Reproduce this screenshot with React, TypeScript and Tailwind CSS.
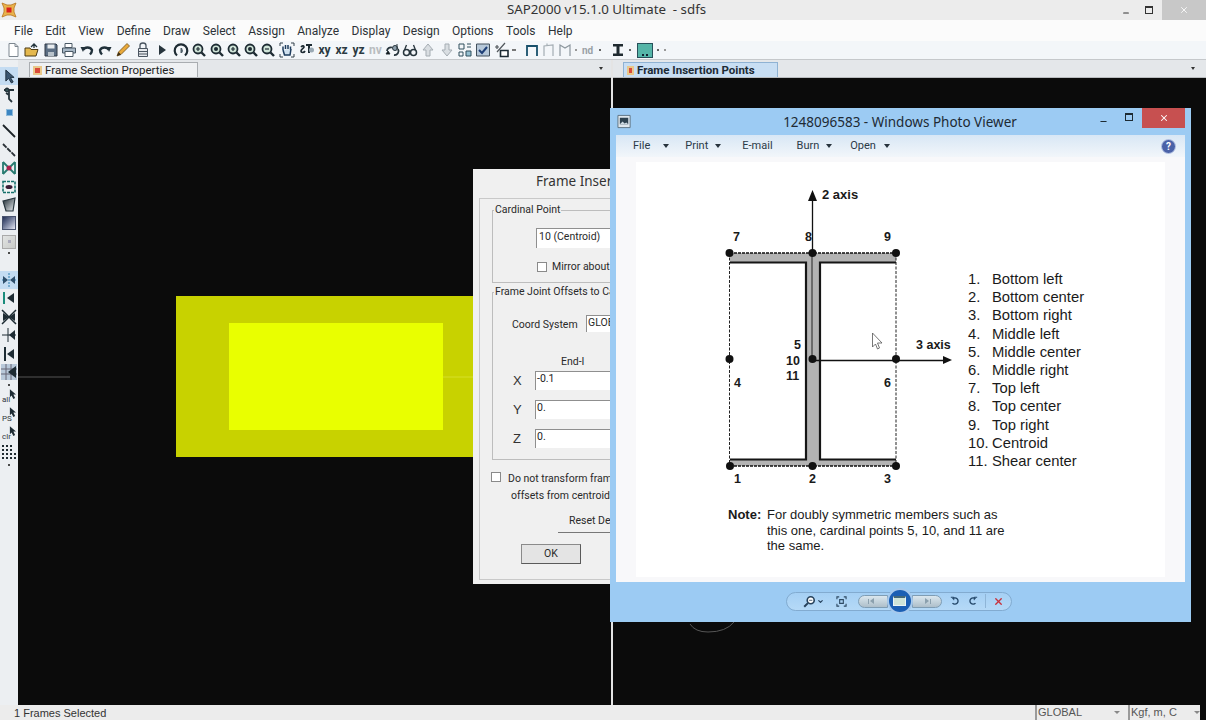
import type { ReactNode } from "react";
import { ChevronDown, Minus, X } from "lucide-react";

const menus = ["File", "Edit", "View", "Define", "Draw", "Select", "Assign", "Analyze", "Display", "Design", "Options", "Tools", "Help"];

const legend = ["Bottom left", "Bottom center", "Bottom right", "Middle left", "Middle center", "Middle right", "Top left", "Top center", "Top right", "Centroid", "Shear center"];

function Ic({ children }: { children: ReactNode }) {
  return (
    <svg viewBox="0 0 16 16" className="w-4 h-4 shrink-0">
      {children}
    </svg>
  );
}

function Mag({ sign }: { sign?: string }) {
  return (
    <Ic>
      <circle cx="7" cy="7" r="4.5" fill="#cfe4d8" stroke="#1d2b33" strokeWidth="1.8" />
      <path d="M10.5 10.5 14 14" stroke="#1d2b33" strokeWidth="2.4" />
      {sign === "plus" && <path d="M5 7h4M7 5v4" stroke="#1d2b33" strokeWidth="1.2" />}
      {sign === "minus" && <path d="M5 7h4" stroke="#1d2b33" strokeWidth="1.2" />}
      {sign === "dot" && <circle cx="7" cy="7" r="2" fill="#1d2b33" />}
    </Ic>
  );
}

function Word({ text, faded }: { text: string; faded?: boolean }) {
  return (
    <span className={faded ? "text-[12px] font-bold text-[#b9bdc0]" : "text-[12px] font-bold text-[#2b3a42]"}>{text}</span>
  );
}

const topTools: { w: string; icon: ReactNode }[] = [
  { w: "w-[18px]", icon: <Ic><path d="M4 1.5h6l3 3v10H4z" fill="#fff" stroke="#7d8790" /><path d="M10 1.5v3h3" fill="none" stroke="#7d8790" /></Ic> },
  { w: "w-[19px]", icon: <Ic><path d="M1 6h5l1 1.500h7l-2 6.500H1z" fill="#e4b84e" stroke="#4b3a14" /><path d="M7 5l3-3 3 3M10 2v4" fill="none" stroke="#22343c" strokeWidth="1.300" /></Ic> },
  { w: "w-[19px]", icon: <Ic><path d="M2 2h11l1 1v11H2z" fill="#5c6f84" stroke="#303b47" /><path d="M4.500 2.500h7v4h-7z" fill="#e8ecef" /><path d="M5 10h6v4H5z" fill="#b9c3cb" /></Ic> },
  { w: "w-[18px]", icon: <Ic><path d="M4 1.500h7v4H4z" fill="#fff" stroke="#4a5965" /><path d="M1.500 6h13v5h-13z" fill="#a8b8c6" stroke="#4a5965" /><path d="M4 9.500h8v5H4z" fill="#fff" stroke="#4a5965" /></Ic> },
  { w: "w-[18px]", icon: <Ic><path d="M4 8a5 4.500 0 0 1 9 0c0 2-1 3.500-2 4.500" fill="none" stroke="#20303a" strokeWidth="2.400" /><path d="M1.500 5 6 5 4 10z" fill="#20303a" /></Ic> },
  { w: "w-[17px]", icon: <Ic><path d="M12 8a5 4.500 0 0 0-9 0c0 2 1 3.500 2 4.500" fill="none" stroke="#20303a" strokeWidth="2.400" /><path d="M14.500 5 10 5 12 10z" fill="#20303a" /></Ic> },
  { w: "w-[20px]", icon: <Ic><path d="M2 14l1.500-4L12 1.500 14.500 4 6 12.500z" fill="#e9a93a" stroke="#70501a" strokeWidth=".8" /><path d="M2 14l1.500-4 2.500 2.500z" fill="#3d2f18" /></Ic> },
  { w: "w-[20px]", icon: <Ic><path d="M5 6V3.500a3 2.500 0 0 1 6 0V6" fill="none" stroke="#4a5560" strokeWidth="1.300" /><path d="M3.500 6.500h9v8h-9z" fill="#e6e9ec" stroke="#4a5560" /><path d="M3.500 9.500h9M3.500 12h9" stroke="#4a5560" /></Ic> },
  { w: "w-[18px]", icon: <Ic><path d="M5 3l7 5-7 5z" fill="#27353d" /></Ic> },
  { w: "w-[19px]", icon: <Ic><path d="M4 13.500A6.300 6.300 0 1 1 12 13.500" fill="none" stroke="#1d2b33" strokeWidth="2.200" /><path d="M7.500 6h1.500l1 3-1 2H7.500z" fill="#51606b" /></Ic> },
  { w: "w-[18px]", icon: <Mag sign="plus" /> },
  { w: "w-[17px]", icon: <Mag sign="dot" /> },
  { w: "w-[17px]", icon: <Mag sign="plus" /> },
  { w: "w-[17px]", icon: <Mag sign="dot" /> },
  { w: "w-[18px]", icon: <Mag sign="minus" /> },
  { w: "w-[20px]", icon: <Ic><path d="M1 1h3M1 1v3M15 1h-3M15 1v3M1 15h3M1 15v-3M15 15h-3M15 15v-3" stroke="#32414b" /><path d="M4 8V4.500M6.500 7V3M9 7V3M11.500 7.500V4.500M4 8l1.500 5h5.500l1-6" fill="#cfe0ee" stroke="#1d3c5e" strokeWidth="1.500" /></Ic> },
  { w: "w-[19px]", icon: <Ic><path d="M2 5c2-2 3-1 3 0s-3 2-3 4 3 2 4 0" fill="none" stroke="#1d2b33" strokeWidth="1.700" /><path d="M7 3h6M10 3v8" stroke="#1d2b33" strokeWidth="2" /><circle cx="12.500" cy="8" r="2.500" fill="#9aa9b4" /></Ic> },
  { w: "w-[17px]", icon: <Word text="xy" /> },
  { w: "w-[17px]", icon: <Word text="xz" /> },
  { w: "w-[17px]", icon: <Word text="yz" /> },
  { w: "w-[17px]", icon: <Word text="nv" faded /> },
  { w: "w-[17px]", icon: <Ic><path d="M2 9a4 4 0 0 1 5-3.500M9 13a4 4 0 0 0 4-6" fill="none" stroke="#26343c" strokeWidth="1.800" /><circle cx="10" cy="6" r="2.500" fill="#8ea0ad" stroke="#26343c" /><path d="M1 12l2-3 2 3zM12 2v5" stroke="#26343c" /></Ic> },
  { w: "w-[18px]", icon: <Ic><circle cx="4.500" cy="10.500" r="3" fill="none" stroke="#26343c" strokeWidth="1.500" /><circle cx="11.500" cy="10.500" r="3" fill="none" stroke="#26343c" strokeWidth="1.500" /><path d="M7 9.500h2M2.500 8l2-5M13.500 8l-2-5" stroke="#26343c" strokeWidth="1.300" /></Ic> },
  { w: "w-[18px]", icon: <Ic><path d="M8 2l5 6h-3v6H6V8H3z" fill="#d9dee2" stroke="#a5adb3" /></Ic> },
  { w: "w-[19px]", icon: <Ic><path d="M8 14l5-6h-3V2H6v6H3z" fill="#d9dee2" stroke="#a5adb3" /></Ic> },
  { w: "w-[18px]", icon: <Ic><path d="M2 2h5v5H2zM10 2h4M10 5h4M2 10h4v4H2z" fill="none" stroke="#2f4e5c" /><path d="M9 9h5v5H9z" fill="#94bfd1" stroke="#2f4e5c" /></Ic> },
  { w: "w-[18px]", icon: <Ic><path d="M1.500 2h13v12h-13z" fill="#b6c8d9" stroke="#42505c" /><path d="M4 8l3 3 5-6" fill="none" stroke="#1e3f76" strokeWidth="2" /></Ic> },
  { w: "w-[20px]", icon: <Ic><path d="M1 5h4M3 3v4M11 1 3 10" stroke="#51575c" strokeWidth="1.200" /><path d="M6.500 8.500h7.500v6H6.500z" fill="#fff" stroke="#1d2b33" strokeWidth="1.600" /></Ic> },
];

const midTools: { w: string; icon: ReactNode }[] = [
  { w: "w-[18px]", icon: <Ic><path d="M3 14V4h10v10" fill="none" stroke="#18506b" strokeWidth="1.800" /></Ic> },
  { w: "w-[16px]", icon: <Ic><path d="M3 14V4l9-1v11M6 4V1.500" fill="none" stroke="#a4adb3" strokeWidth="1.200" /></Ic> },
  { w: "w-[16px]", icon: <Ic><path d="M3 14V3l5 3 5-3v11" fill="none" stroke="#8d979e" strokeWidth="1.200" /></Ic> },
];

function SideDot({ tight }: { tight?: boolean }) {
  return <span className={tight ? "w-[2px] h-[2px] bg-[#4a4a4a] my-px" : "w-[2px] h-[2px] bg-[#4a4a4a] my-[2.300px]"} />;
}

function SideIcon({ children, on }: { children: ReactNode; on?: boolean }) {
  return (
    <div className={on ? "w-[18px] h-[18.400px] flex items-center justify-center bg-[#c4dcf2]" : "w-[18px] h-[18.400px] flex items-center justify-center"}>
      {children}
    </div>
  );
}

function Note({ children }: { children: ReactNode }) {
  return <p>{children}</p>;
}

function Legend() {
  return (
    <ol className="mt-[100px] -ml-[2px] w-[140px] flex flex-col text-[14.800px] leading-[18.200px] text-[#1a1a1a]">
      {legend.map((label, i) => (
        <li key={label} className="flex">
          <span className="w-[24px]">{i + 1}.</span>
          <span>{label}</span>
        </li>
      ))}
    </ol>
  );
}

function SectionDiagram() {
  const dots = [
    [729.500, 253], [812.500, 253], [896, 253], [729.500, 359], [812.500, 359], [896, 359], [730, 466], [812.500, 466], [896, 466],
  ];
  return (
    <svg viewBox="700 170 270 320" className="w-[270px] h-[320px] shrink-0" fontFamily="Liberation Sans" fontWeight="700" fontSize="12.500" fill="#1a1a1a">
      <path d="M730 253h166v9h-76v197h76v7H730v-7h76V262h-76z" fill="#b3b3b3" />
      <path d="M730 262.500h76v197h-76M896 262.500h-76v197h76" fill="none" stroke="#151515" strokeWidth="2.200" />
      <path d="M730 253h166M730 466h166" fill="none" stroke="#111" strokeWidth="1.500" strokeDasharray="3 1" />
      <path d="M729.500 253v213M896 253v213" fill="none" stroke="#222" strokeWidth="1" strokeDasharray="3 1.500" />
      <path d="M812 359V253" stroke="#222" strokeWidth="1" />
      <path d="M812.500 253v-56" stroke="#111" strokeWidth="1.300" />
      <path d="M812.500 190l-4.500 11h9z" fill="#111" />
      <path d="M812.500 360.500H945" stroke="#111" strokeWidth="1.300" />
      <path d="M952 360l-9-4v8z" fill="#111" />
      {dots.map(([x, y]) => (
        <circle key={`${x}-${y}`} cx={x} cy={y} r="4" fill="#111" />
      ))}
      <text x="822" y="199" fontSize="13">2 axis</text>
      <text x="916" y="349" fontSize="12.500">3 axis</text>
      <text x="733" y="241">7</text>
      <text x="805" y="241">8</text>
      <text x="884" y="241">9</text>
      <text x="794" y="349">5</text>
      <text x="786" y="365">10</text>
      <text x="786" y="380">11</text>
      <text x="734" y="387">4</text>
      <text x="884" y="387">6</text>
      <text x="734" y="483">1</text>
      <text x="809" y="483">2</text>
      <text x="884" y="483">3</text>
      <path d="M872.500 333v14l3-3 2 5 2-1-2-5h4.500z" fill="#fff" stroke="#555" strokeWidth=".8" />
    </svg>
  );
}

function Field({ label, value }: { label: string; value: string }) {
  return (
    <div className="flex items-center h-[19px] mb-[10px]">
      <span className="w-[23px] pl-[1px] text-[13px] text-[#333] font-['Liberation_Sans',sans-serif]">{label}</span>
      <div className="w-[90px] h-[19px] bg-white border-l border-t border-[#8f8f8f] pl-[1px] leading-[14px] text-[#222]">{value}</div>
    </div>
  );
}

function Box() {
  return <span className="block w-[10px] h-[10px] bg-white border border-[#8a8a8a] shrink-0" />;
}

function FrameDialog() {
  return (
    <div className="absolute left-[473px] top-[169px] w-[150px] h-[415px] bg-[#f0f0f0] font-['Roboto',sans-serif] text-[10.500px] text-[#2a2a2a]">
      <div className="h-[29px] pl-[63px] pt-[3px] text-[13.500px] leading-[18px] text-[#333] whitespace-nowrap font-['Noto_Sans',sans-serif]">Frame Insertion</div>
      <div className="mx-[6px] h-[382px] border border-[#c9c9c9] pl-[12px] pt-[4px]">
        <fieldset className="h-[80px] border border-[#bdbdbd] pl-[43px] w-[200px]">
          <legend className="-ml-[42px] px-[1px] leading-[14px]">Cardinal Point</legend>
          <div className="mt-[11px] w-[130px] h-[20px] bg-white border-l border-t border-[#8f8f8f] pl-[2px] leading-[15px]">10 (Centroid)</div>
          <div className="flex items-center gap-[5px] mt-[11px] ml-[1px] whitespace-nowrap"><Box />Mirror about Local</div>
        </fieldset>
        <fieldset className="mt-[2px] h-[175px] border border-[#bdbdbd] pl-[19px] w-[200px]">
          <legend className="-ml-[18px] px-[1px] leading-[14px] whitespace-nowrap">Frame Joint Offsets to Cardinal</legend>
          <div className="flex items-center mt-[16px] h-[17px] whitespace-nowrap">
            <span className="w-[74px] pt-[3px]">Coord System</span>
            <div className="w-[60px] h-[17px] bg-white border-l border-t border-[#8f8f8f] pl-[1px] leading-[13px]">GLOBAL</div>
          </div>
          <div className="mt-[23px] ml-[49px] leading-[14px]">End-I</div>
          <div className="mt-[2px]">
            <Field label="X" value="-0.1" />
            <Field label="Y" value="0." />
            <Field label="Z" value="0." />
          </div>
        </fieldset>
        <div className="flex items-start gap-[7px] mt-[10px] -ml-[1px] whitespace-nowrap leading-[17px]">
          <span className="block mt-[2px]"><Box /></span>
          <span>Do not transform frame<br /><span className="ml-[3px]">offsets from centroid</span></span>
        </div>
        <div className="mt-[9px] ml-[66px] w-[80px] h-[20px] pl-[11px] border-b border-[#777] leading-[16px] whitespace-nowrap">Reset Default</div>
        <div className="mt-[11px] ml-[29px] w-[60px] h-[20px] flex items-center justify-center bg-[#e4e4e4] border border-[#8a8a8a] border-b-[#5a5a5a] border-r-[#5a5a5a]">OK</div>
      </div>
    </div>
  );
}

function ViewerBar() {
  return (
    <div className="h-[40px] flex items-center justify-center pb-[2px] pr-[4px]">
      <div className="w-[226px] h-[19px] rounded-full border border-[#82abd0] bg-gradient-to-b from-[#a5d0f4] to-[#b5d9f7] flex items-center pl-[16px]">
        <svg viewBox="0 0 16 16" className="w-[13px] h-[13px] shrink-0">
          <circle cx="9.500" cy="6.500" r="4.300" fill="#fff" stroke="#27425c" strokeWidth="2" />
          <path d="M6 10l-4.500 4.500" stroke="#27425c" strokeWidth="2.500" />
          <path d="M7.500 6.500h4" stroke="#27425c" />
        </svg>
        <ChevronDown size={7} strokeWidth={4} className="ml-[1px] text-[#27425c]" />
        <svg viewBox="0 0 12 12" className="ml-[12px] w-[11px] h-[11px] shrink-0" fill="none" stroke="#2e4a63" strokeWidth="1.200">
          <path d="M1 3.500V1h2.500M8.500 1H11v2.500M1 8.500V11h2.500M8.500 11H11V8.500" />
          <path d="M4 4h4v4H4z" />
        </svg>
        <div className="ml-[11px] w-[30px] h-[13px] rounded-l-full border border-[#7f9db4] bg-gradient-to-b from-[#dbe7ee] to-[#aebfca] flex items-center justify-center gap-[1px] pr-[3px]">
          <span className="w-[1.500px] h-[5px] bg-[#8ba0ae]" />
          <span className="w-0 h-0 border-y-[3px] border-y-transparent border-r-[4px] border-r-[#8ba0ae]" />
        </div>
        <div className="-mx-[1px] z-10 w-[26px] h-[26px] shrink-0 rounded-full border-2 border-[#a7c9ec] bg-[#1b5fb4] flex items-center justify-center">
          <div className="w-[13px] h-[10px] bg-[#cfe4d8] border border-[#eaf4f6] border-t-[#43687a] border-t-2" />
        </div>
        <div className="w-[30px] h-[13px] rounded-r-full border border-[#7f9db4] bg-gradient-to-b from-[#dbe7ee] to-[#aebfca] flex items-center justify-center gap-[1px] pl-[3px]">
          <span className="w-0 h-0 border-y-[3px] border-y-transparent border-l-[4px] border-l-[#8ba0ae]" />
          <span className="w-[1.500px] h-[5px] bg-[#8ba0ae]" />
        </div>
        <svg viewBox="0 0 12 12" className="ml-[8px] w-[10px] h-[10px] shrink-0" fill="none" stroke="#234668" strokeWidth="1.600">
          <path d="M3 3.500A3.800 3.800 0 1 1 3 8.500" />
          <path d="M1 1.500h3.500V5" strokeWidth="1.200" />
        </svg>
        <svg viewBox="0 0 12 12" className="ml-[8px] w-[10px] h-[10px] shrink-0" fill="none" stroke="#234668" strokeWidth="1.600">
          <path d="M9 3.500A3.800 3.800 0 1 0 9 8.500" />
          <path d="M11 1.500H7.500V5" strokeWidth="1.200" />
        </svg>
        <span className="ml-[7px] w-px h-[14px] bg-[#8fb5d7]" />
        <X size={11} strokeWidth={3} className="ml-[7px] text-[#c8323c]" />
      </div>
    </div>
  );
}

function Tri({ ml }: { ml: string }) {
  return <span className={`${ml} w-0 h-0 border-x-[3px] border-x-transparent border-t-[4px] border-t-[#27333d]`} />;
}

function PhotoViewer() {
  return (
    <div className="absolute left-[610px] top-[108px] w-[581px] h-[514px] bg-[#9ccbf3] font-['Noto_Sans',sans-serif] flex flex-col">
      <div className="h-[27px] flex items-start shrink-0">
        <svg viewBox="0 0 16 16" className="ml-[7px] mt-[6px] w-[15px] h-[15px] shrink-0">
          <path d="M1 1.500h13v13H1z" fill="#dfe8ee" stroke="#5d7180" />
          <path d="M3 4h9v7H3z" fill="#2f4350" />
          <path d="M3 11l3-3 2 2 2-1 2 2z" fill="#cfdbe3" />
        </svg>
        <div className="flex-1 text-center pt-[4px] pl-[69px] text-[13.500px] leading-[20px] text-[#202a33]">1248096583 - Windows Photo Viewer</div>
        <Minus size={9} strokeWidth={3} className="mt-[9px] text-[#1d2b33]" />
        <span className="ml-[17px] mt-[5px] w-[8px] h-[8px] border border-t-2 border-[#1d2b33]" />
        <div className="ml-[9px] mr-[6px] w-[43px] h-[20px] bg-[#c75050] flex items-center justify-center">
          <X size={10} strokeWidth={2.500} className="text-white" />
        </div>
      </div>
      <div className="mx-[6px] h-[22px] shrink-0 bg-gradient-to-b from-[#d8e7f5] to-[#f2f6fa] flex items-center pl-[17px] text-[11px] font-['Roboto',sans-serif] text-[#2b3a47]">
        <span>File</span>
        <Tri ml="ml-[13px]" />
        <span className="ml-[16px]">Print</span>
        <Tri ml="ml-[7px]" />
        <span className="ml-[21px]">E-mail</span>
        <span className="ml-[24px]">Burn</span>
        <Tri ml="ml-[7px]" />
        <span className="ml-[18px]">Open</span>
        <Tri ml="ml-[8px]" />
        <span className="ml-auto mr-[9px] w-[15px] h-[15px] rounded-full bg-[#4a62a8] border border-[#b8c6e6] text-white text-[10px] leading-[13px] text-center font-bold">?</span>
      </div>
      <div className="mx-[6px] h-[425px] shrink-0 bg-[#f8f8fa] px-[20px] pt-[5px] pb-[5px] font-['Liberation_Sans',sans-serif]">
        <div className="h-full bg-white">
          <div className="flex pl-[64px] pt-[8px]">
            <SectionDiagram />
            <Legend />
          </div>
          <div className="flex mt-[17px] ml-[92px] text-[13px] leading-[15.500px] text-[#1a1a1a]">
            <span className="w-[39px] font-bold">Note:</span>
            <div className="w-[260px]">
              <Note>For doubly symmetric members such as</Note>
              <Note>this one, cardinal points 5, 10, and 11 are</Note>
              <Note>the same.</Note>
            </div>
          </div>
        </div>
      </div>
      <ViewerBar />
    </div>
  );
}

export default function App() {
  return (
    <div className="relative w-[1206px] h-[720px] overflow-hidden flex flex-col bg-[#f0f0f0] font-['Roboto',sans-serif] text-[#222]">
      <div className="h-[20px] shrink-0 bg-[#ececec] flex items-center">
        <svg viewBox="0 0 16 16" className="ml-[1px] w-[16px] h-[16px] shrink-0">
          <path d="M1 1l5 2h4l5-2-2 5v4l2 5-5-2H6l-5 2 2-5V6z" fill="#e9b24c" stroke="#b7731c" strokeWidth=".8" />
          <path d="M5.500 5.500h5v5h-5z" fill="#d81e1e" />
        </svg>
        <div className="flex-1 text-center pl-[74px] text-[13.300px] font-['Noto_Sans',sans-serif] text-[#333]">SAP2000 v15.1.0 Ultimate&nbsp; - sdfs</div>
        <Minus size={8} strokeWidth={3.500} className="mt-[5px] mr-[15px] text-[#333]" />
        <span className="mr-[9px] w-[8px] h-[8px] border border-t-2 border-[#333]" />
        <div className="w-[44px] h-[20px] bg-[#c8c8c8] flex items-center justify-center">
          <X size={10} strokeWidth={2} className="text-white" />
        </div>
      </div>
      <div className="h-[21px] shrink-0 bg-[#fbfbfb] flex items-center gap-[12.500px] pl-[14px] text-[12px] text-[#2d3338]">
        {menus.map((m) => (
          <span key={m}>{m}</span>
        ))}
      </div>
      <div className="h-[19px] shrink-0 bg-[#f3f6f9] border-b border-[#c5c8cb] flex items-center pl-[4px]">
        {topTools.map((t, i) => (
          <div key={i} className={`${t.w} h-[18px] shrink-0 flex items-center justify-center`}>
            {t.icon}
          </div>
        ))}
        <span className="w-[4px] h-[2px] bg-[#777] mr-[7px]" />
        {midTools.map((t, i) => (
          <div key={i} className={`${t.w} h-[18px] shrink-0 flex items-center justify-center`}>
            {t.icon}
          </div>
        ))}
        <span className="ml-[2px] w-[2px] h-[2px] bg-[#999]" />
        <span className="ml-[5px] text-[10px] font-bold text-[#9aa1a6]">nd</span>
        <span className="ml-[6px] mr-[9px] w-[2px] h-[2px] bg-[#666]" />
        <div className="w-[16px] flex justify-center">
          <svg viewBox="0 0 16 16" className="w-4 h-4"><path d="M3 2h10v2.500H9.500v7H13V14H3v-2.500h3.500v-7H3z" fill="#1f2a30" /></svg>
        </div>
        <span className="ml-[3px] mr-[6px] w-[2px] h-[2px] bg-[#666]" />
        <div className="w-[16px] h-[15px] bg-[#55b5a8] border border-[#27505a] flex items-end justify-center gap-[2px] pb-[1px]">
          <span className="w-[2px] h-[2px] bg-[#123]" />
          <span className="w-[2px] h-[2px] bg-[#123]" />
        </div>
        <span className="ml-[4px] w-[2px] h-[2px] bg-[#666]" />
        <span className="ml-[5px] w-[2px] h-[2px] bg-[#999]" />
      </div>

      <div className="flex-1 min-h-0 flex">
        <div className="w-[18px] shrink-0 bg-[#eceff2] flex flex-col items-center pt-[7px]">
          <SideIcon on><svg viewBox="0 0 12 16" className="w-[11px] h-[15px]"><path d="M2 1v12l3-3 3 5 2-1-3-5h4z" fill="#3b5670" stroke="#1b2c3a" /></svg></SideIcon>
          <SideIcon><svg viewBox="0 0 14 16" className="w-[14px] h-[16px]" fill="none" stroke="#24323a" strokeWidth="1.800"><path d="M2 3h10M7 3v9l3 3M4 6l3 2" /><circle cx="5" cy="3" r="1.500" fill="#5db3a0" /></svg></SideIcon>
          <SideIcon><span className="w-[7px] h-[7px] bg-[#3d86c2] border border-[#8fbbdb]" /></SideIcon>
          <SideIcon><svg viewBox="0 0 16 16" className="w-4 h-4"><path d="M2 2l12 12" stroke="#1b2227" strokeWidth="1.800" /></svg></SideIcon>
          <SideIcon><svg viewBox="0 0 16 16" className="w-4 h-4"><path d="M2 2l12 12" stroke="#2a3137" strokeWidth="1.800" strokeDasharray="5 1" /></svg></SideIcon>
          <SideIcon><svg viewBox="0 0 16 16" className="w-4 h-4" fill="none" stroke="#277a70" strokeWidth="1.800"><path d="M2 2l12 12M14 2 2 14M2 2v12M14 2v12" /><circle cx="8" cy="8" r="2.500" fill="#a8204c" stroke="none" /></svg></SideIcon>
          <SideIcon><svg viewBox="0 0 16 16" className="w-4 h-4"><path d="M2 2.500h12v11H2z" fill="#eef3f3" stroke="#16706c" strokeWidth="1.600" strokeDasharray="3 1" /><ellipse cx="8" cy="8" rx="3.500" ry="2" fill="#3a1b34" /></svg></SideIcon>
          <SideIcon><svg viewBox="0 0 16 16" className="w-4 h-4"><defs><linearGradient id="q" x1="0" y1="0" x2="1" y2="1"><stop stopColor="#17242c" /><stop offset="1" stopColor="#eef2f5" /></linearGradient></defs><path d="M2 4l12-3-2 13H5z" fill="url(#q)" stroke="#26343c" strokeWidth="1.200" /></svg></SideIcon>
          <SideIcon><span className="w-[14px] h-[14px] bg-gradient-to-br from-[#232f55] to-[#e6e8f4] border border-[#48526e]" /></SideIcon>
          <SideIcon><span className="w-[14px] h-[14px] bg-gradient-to-br from-[#e2e4e3] to-[#c9cbc9] border border-[#aaa] flex items-center justify-center"><span className="w-[3px] h-[3px] bg-[#aab]" /></span></SideIcon>
          <SideDot tight />
          <div className="h-[16px]" />
          <SideIcon on><svg viewBox="0 0 16 16" className="w-4 h-4" fill="#2f4f6c"><path d="M8 1v14" stroke="#2c7fae" strokeDasharray="2 1" /><path d="M1 8h5M10 8h5" stroke="#2c7fae" /><path d="M7 8 2 4v8zM9 8l5-4v8z" /></svg></SideIcon>
          <SideIcon><svg viewBox="0 0 16 16" className="w-4 h-4" fill="#1d2b33"><path d="M3 2v12" stroke="#1a8c7c" strokeWidth="2" /><path d="M6 8l7-5v10z" /></svg></SideIcon>
          <SideIcon><svg viewBox="0 0 16 16" className="w-4 h-4" fill="#1d2b33"><path d="M1 1l14 14M15 1 1 15" stroke="#1d2b33" strokeWidth="1.500" /><path d="M8 8 2 4v8zM8 8l6-4v8z" /></svg></SideIcon>
          <SideIcon><svg viewBox="0 0 16 16" className="w-4 h-4" fill="#1d2b33"><path d="M1 8h14M7 1v14" stroke="#1d2b33" /><path d="M8 8l6-5v10z" /></svg></SideIcon>
          <SideIcon><svg viewBox="0 0 16 16" className="w-4 h-4" fill="#1d2b33"><path d="M4 1v14" stroke="#1d2b33" strokeWidth="2" /><path d="M6 8l7-5v10z" /></svg></SideIcon>
          <SideIcon><svg viewBox="0 0 16 16" className="w-4 h-4" fill="#1d2b33"><path d="M0 0h16v16H0z" fill="#b9c9da" /><path d="M0 5h16M0 10h16M5 0v16M10 0v16" stroke="#667" /><path d="M7 8l8-6v12z" /></svg></SideIcon>
          <SideDot />
          {["all", "PS", "clr"].map((w) => (
            <div key={w} className="relative w-[18px] h-[18.400px] text-[8px] leading-none text-[#30373d]">
              <span className="absolute left-[2px] bottom-[2px]">{w}</span>
              <svg viewBox="0 0 8 12" className="absolute right-[2px] top-[1px] w-[7px] h-[11px]"><path d="M1 0v9l2-2 2 4 2-1-2-4h3z" fill="#1d2b33" /></svg>
            </div>
          ))}
          <SideIcon><svg viewBox="0 0 16 16" className="w-4 h-4" fill="#1f2a30"><path d="M1 1h2v2H1zM5 1h2v2H5zM1 5h2v2H1zM5 5h2v2H5zM9 5h2v2H9zM1 9h2v2H1zM5 9h2v2H5zM9 9h2v2H9zM13 9h2v2h-2zM1 13h2v2H1zM5 13h2v2H5zM9 13h2v2H9zM13 13h2v2h-2zM9 1h2v2H9z" /></svg></SideIcon>
          <SideDot />
        </div>

        <div className="flex-1 min-w-0 flex flex-col">
          <div className="h-[18px] shrink-0 bg-[#e4e7ea] border-b border-[#b9bcbf] flex items-end pl-[11px] pr-[8px]">
            <div className="w-[169px] h-[15px] bg-[#eff1f3] border border-b-0 border-[#a9adb1] flex items-center gap-[2px] pl-[3px] text-[11.500px] leading-none pt-[1px]">
              <span className="w-[9px] h-[9px] bg-[#d94a3a] border-2 border-[#e9c88a]" />
              <span className="ml-[1px]">Frame Section Properties</span>
            </div>
            <span className="ml-auto mb-[7px] w-0 h-0 border-x-[2px] border-x-transparent border-t-[3px] border-t-[#333]" />
          </div>
          <div className="flex-1 min-h-0 bg-[#0b0b0b]">
            <svg viewBox="18 78 593 627" className="w-full h-full">
              <path d="M18 377h52" stroke="#555" strokeWidth="1" />
              <path d="M176 296h298v161H176z" fill="#c8d200" />
              <path d="M229 323h214v107H229z" fill="#e9ff00" />
              <path d="M443 377h30" stroke="#d6df28" strokeWidth="1" />
            </svg>
          </div>
        </div>
        <div className="w-[2px] shrink-0 bg-[#e4e4e4]" />
        <div className="w-[593px] shrink-0 flex flex-col">
          <div className="h-[18px] shrink-0 bg-[#e4e7ea] border-b border-[#b9bcbf] flex items-end pl-[10px] pr-[11px]">
            <div className="w-[155px] h-[15px] bg-[#c8def3] border border-b-0 border-[#8fb2d3] flex items-center gap-[2px] pl-[3px] text-[11.500px] font-bold leading-none text-[#1d2b36] pt-[1px]">
              <span className="w-[7px] h-[9px] bg-[#d94a3a] border-2 border-[#e9c88a]" />
              <span className="ml-[1px]">Frame Insertion Points</span>
            </div>
            <span className="ml-auto mb-[7px] w-0 h-0 border-x-[2px] border-x-transparent border-t-[3px] border-t-[#333]" />
          </div>
          <div className="flex-1 min-h-0 bg-[#0b0b0b]">
            <svg viewBox="613 78 593 627" className="w-full h-full">
              <path d="M690 624q5 8 18 8 18 0 26-10" fill="none" stroke="#555" strokeWidth="1" />
            </svg>
          </div>
        </div>
      </div>

      <div className="h-[15px] shrink-0 flex items-stretch text-[11px] font-['Liberation_Sans',sans-serif]">
        <div className="w-[1200px] bg-[#ececec] flex items-center pl-[14px] leading-none">
          <span className="pt-[2px] text-[#333]">1 Frames Selected</span>
          <div className="ml-auto w-[90px] h-full border-l-2 border-[#9a9a9a] pl-[1px] text-[#555] flex items-center justify-between pr-[5px]">
            GLOBAL
            <span className="w-0 h-0 border-x-[3px] border-x-transparent border-t-[3px] border-t-[#888]" />
          </div>
          <div className="ml-[3px] w-[72px] h-full border-l-2 border-[#9a9a9a] pl-[1px] text-[#555] flex items-center justify-between">
            Kgf, m, C
            <span className="w-0 h-0 border-x-[3px] border-x-transparent border-t-[3px] border-t-[#888]" />
          </div>
        </div>
        <div className="flex-1 bg-[#0b0b0b]" />
      </div>

      <FrameDialog />
      <PhotoViewer />
    </div>
  );
}
